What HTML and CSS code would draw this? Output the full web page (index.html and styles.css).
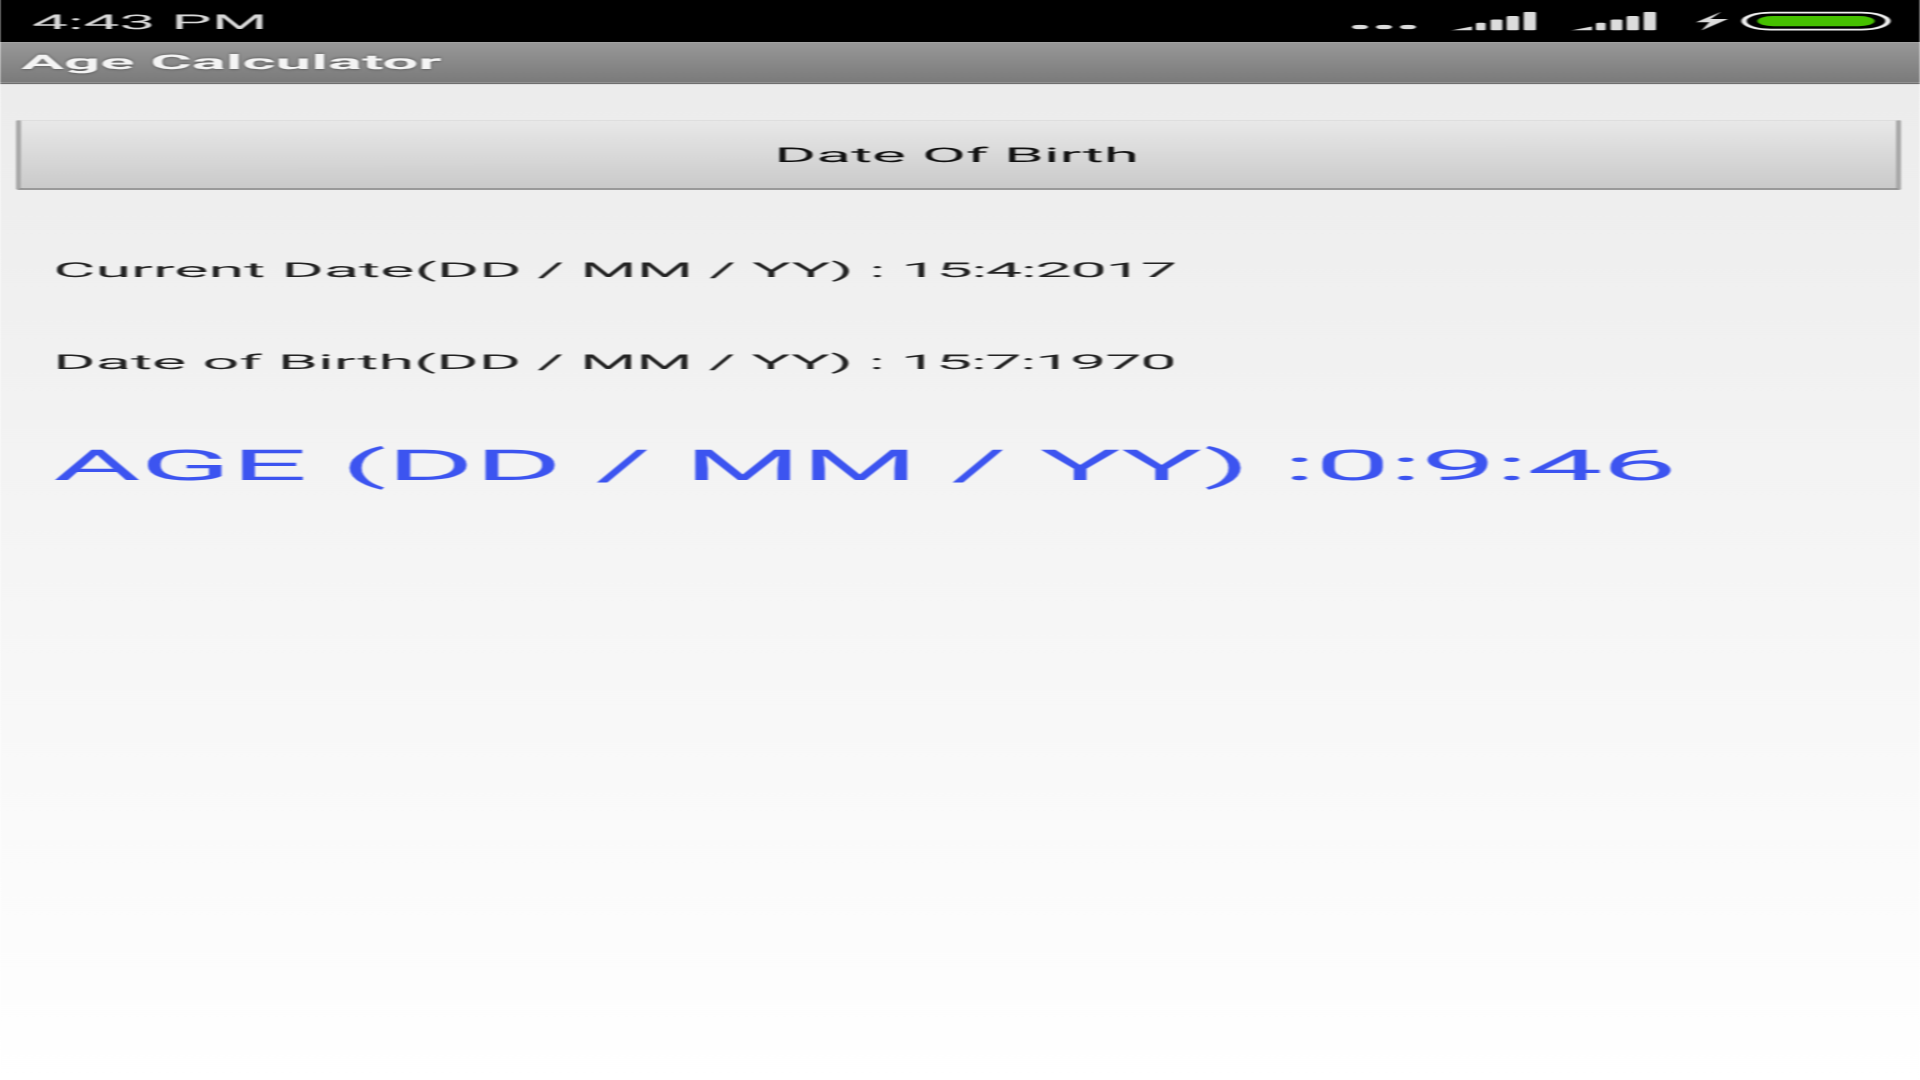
FILE: index.html
```html
<!DOCTYPE html>
<html lang="en">
<head>
  <meta charset="UTF-8" />
  <title>Age Calculator</title>
  <link rel="stylesheet" href="styles.css">
</head>
<body>
  <!-- phone screen is 720x1280, the screenshot stretches it to fill the window -->
  <div class="screen">
    <div class="status-bar">
      <span class="clock">4:43 PM</span>
      <div class="status-icons">
        <svg class="dots" width="24" height="6" viewBox="0 0 24 6">
          <ellipse cx="3" cy="3" rx="3" ry="2.8"/>
          <ellipse cx="12" cy="3" rx="3" ry="2.8"/>
          <ellipse cx="21" cy="3" rx="3" ry="2.8"/>
        </svg>
        <svg class="signal" width="32" height="22" viewBox="0 0 32 22">
          <path d="M0 22 L8 17.5 V22 Z"/>
          <rect x="9.5" y="13" width="3.6" height="9" rx="1"/>
          <rect x="15" y="9" width="4.4" height="13" rx="1"/>
          <rect x="21" y="5" width="4.6" height="17" rx="1"/>
          <rect x="27.4" y="0" width="4.6" height="22" rx="1"/>
        </svg>
        <svg class="signal" width="32" height="22" viewBox="0 0 32 22">
          <path d="M0 22 L8 17.5 V22 Z"/>
          <rect x="9.5" y="13" width="3.6" height="9" rx="1"/>
          <rect x="15" y="9" width="4.4" height="13" rx="1"/>
          <rect x="21" y="5" width="4.6" height="17" rx="1"/>
          <rect x="27.4" y="0" width="4.6" height="22" rx="1"/>
        </svg>
        <svg class="bolt" width="12" height="22" viewBox="0 0 12 22">
          <path d="M9.5 0 L5.5 8.5 H12 L2 22 L5 12.5 H0 Z"/>
        </svg>
        <div class="battery"><div class="battery-fill"></div></div>
      </div>
    </div>
    <div class="title-bar">Age Calculator</div>
    <div class="content">
      <button class="dob-button">Date Of Birth</button>
      <p class="date-line first">Current Date(DD / MM / YY) : <span class="date-value">15:4:2017</span></p>
      <p class="date-line">Date of Birth(DD / MM / YY) : <span class="date-value">15:7:1970</span></p>
      <p class="age-line">AGE (DD / MM / YY) <span class="age-value">:0:9:46</span></p>
    </div>
  </div>
</body>
</html>
```

FILE: styles.css
```css
html, body {
  margin: 0;
  height: 100%;
  overflow: hidden;
  background: #fff;
}

.screen {
  width: 720px;
  height: 1280px;
  margin-bottom: -200px;
  transform-origin: 0 0;
  transform: scale(2.66666, 0.84375);
  filter: blur(0.35px);
  display: flex;
  flex-direction: column;
  font-family: Roboto, "Liberation Sans", sans-serif;
  text-rendering: geometricPrecision;
}

.status-bar {
  height: 50px;
  flex: none;
  background: #000;
  display: flex;
  align-items: center;
  justify-content: space-between;
  padding: 0 11px 0 12px;
}

.clock {
  font-size: 24px;
  color: #d8d8d8;
  margin-top: 2px;
}

.status-icons {
  display: flex;
  align-items: center;
  gap: 14px;
}

.status-icons svg {
  fill: #dcdcdc;
  display: block;
}

.dots {
  margin-top: 14px;
  margin-right: -1px;
}

.signal + .signal {
  margin-left: -1px;
}

.bolt {
  margin-left: 1px;
  margin-right: -9px;
}

.battery {
  width: 56px;
  height: 22px;
  box-sizing: border-box;
  border: 2px solid #f0f0f0;
  border-radius: 11px;
  padding: 3px 4px;
  background: #000;
}

.battery-fill {
  height: 100%;
  background: #46c000;
  border-radius: 7px;
}

.title-bar {
  height: 50px;
  flex: none;
  box-sizing: border-box;
  background: linear-gradient(to bottom, #989898, #7a7a7a);
  border-bottom: 2px solid #6e6e6e;
  padding-left: 8px;
  line-height: 49px;
  font-size: 23.8px;
  font-weight: bold;
  color: #f4f4f4;
  text-shadow: 0 0 2px #444;
}

.content {
  flex: 1;
  background: linear-gradient(to bottom, #ececec, #ffffff);
  padding: 42px 7px 0 5.5px;
}

.dob-button {
  display: block;
  width: 100%;
  height: 83px;
  box-sizing: border-box;
  border: none;
  border-top: 1px solid #d8d8d8;
  border-bottom: 2px solid #6a6a6a;
  border-left: 2px solid #a8a8a8;
  border-right: 2px solid #a8a8a8;
  border-radius: 2px;
  padding: 2px 1px 0 0;
  background: linear-gradient(to bottom, #e8e8e8, #cacaca);
  font-family: Roboto, "Liberation Sans", sans-serif;
  text-rendering: geometricPrecision;
  font-size: 24px;
  color: #111;
}

.date-line {
  margin: 79px 0 0;
  padding-left: 14.5px;
  font-size: 24.25px;
  line-height: 30px;
  color: #222;
}

.date-line.first {
  margin-top: 80px;
}

.date-value {
  letter-spacing: -0.46px;
}

.age-line {
  margin: 81px 0 0;
  padding-left: 14.5px;
  font-size: 50.25px;
  line-height: 56px;
  color: #3c54f0;
}

.age-value {
  letter-spacing: -0.3px;
}
```
